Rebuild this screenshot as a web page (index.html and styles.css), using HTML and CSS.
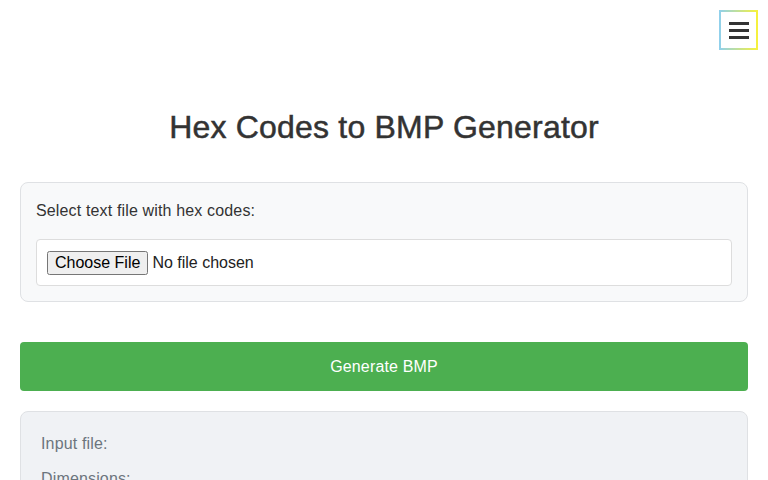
FILE: index.html
```html
<!DOCTYPE html>
<html>
<head>
<meta charset="utf-8">
<link rel="stylesheet" href="styles.css">
</head>
<body>
<header class="topbar">
  <button class="menu-btn" aria-label="menu">
    <span class="bar"></span><span class="bar"></span><span class="bar"></span>
  </button>
</header>
<main class="container">
  <h1 class="title">Hex Codes to BMP Generator</h1>
  <section class="card upload">
    <label class="label" for="file">Select text file with hex codes:</label>
    <div class="file-box">
      <input type="file" id="file" class="file-input">
    </div>
  </section>
  <button class="generate">Generate BMP</button>
  <section class="card info">
    <p class="info-line">Input file:</p>
    <p class="info-line">Dimensions:</p>
  </section>
</main>
</body>
</html>
```
FILE: styles.css
```css
* { box-sizing: border-box; }
html, body { margin: 0; padding: 0; background: #fff; }
body {
  font-family: "Liberation Sans", Arial, sans-serif;
  color: #333;
  overflow: hidden;
  height: 480px;
}
.topbar {
  display: flex;
  justify-content: flex-end;
  padding: 10px 10px 0 0;
  height: 50px;
}
.menu-btn {
  width: 39px;
  height: 40px;
  padding: 0;
  border: 2px solid transparent;
  background: linear-gradient(#fff, #fff) padding-box,
              linear-gradient(90deg, #8fd0ee, #f8f23a) border-box;
  display: flex;
  flex-direction: column;
  align-items: center;
  justify-content: center;
  gap: 4px;
  cursor: pointer;
}
.bar {
  display: block;
  width: 20px;
  height: 3px;
  background: #333;
}
.container {
  padding: 0 20px;
}
.title {
  margin: 58px 0 36px;
  text-align: center;
  font-size: 32px;
  font-weight: 400;
  letter-spacing: 0.2px;
  -webkit-text-stroke: 0.5px #333;
  line-height: 38px;
  color: #333;
}
.card {
  border: 1px solid #dfe1e4;
  border-radius: 8px;
}
.upload {
  background: #f8f9fa;
  padding: 18px 15px 15px;
}
.label {
  display: block;
  font-size: 16px;
  line-height: 19px;
  letter-spacing: 0.15px;
  color: #333;
  margin-bottom: 19px;
}
.file-box {
  background: #fff;
  border: 1px solid #ddd;
  border-radius: 4px;
  padding: 11px 10px;
  height: 47px;
}
.file-input {
  font-family: "Liberation Sans", Arial, sans-serif;
  font-size: 16px;
  color: #222;
}
.generate {
  display: block;
  width: 100%;
  margin: 40px 0 20px;
  height: 49px;
  border: none;
  border-radius: 4px;
  background: #4caf50;
  color: #fff;
  font-family: "Liberation Sans", Arial, sans-serif;
  font-size: 16px;
  letter-spacing: 0.15px;
}
.info {
  background: #f0f2f5;
  padding: 22px 20px;
}
.info-line {
  margin: 0 0 16px;
  font-size: 16px;
  line-height: 19px;
  letter-spacing: 0.15px;
  color: #6c757d;
}
```
